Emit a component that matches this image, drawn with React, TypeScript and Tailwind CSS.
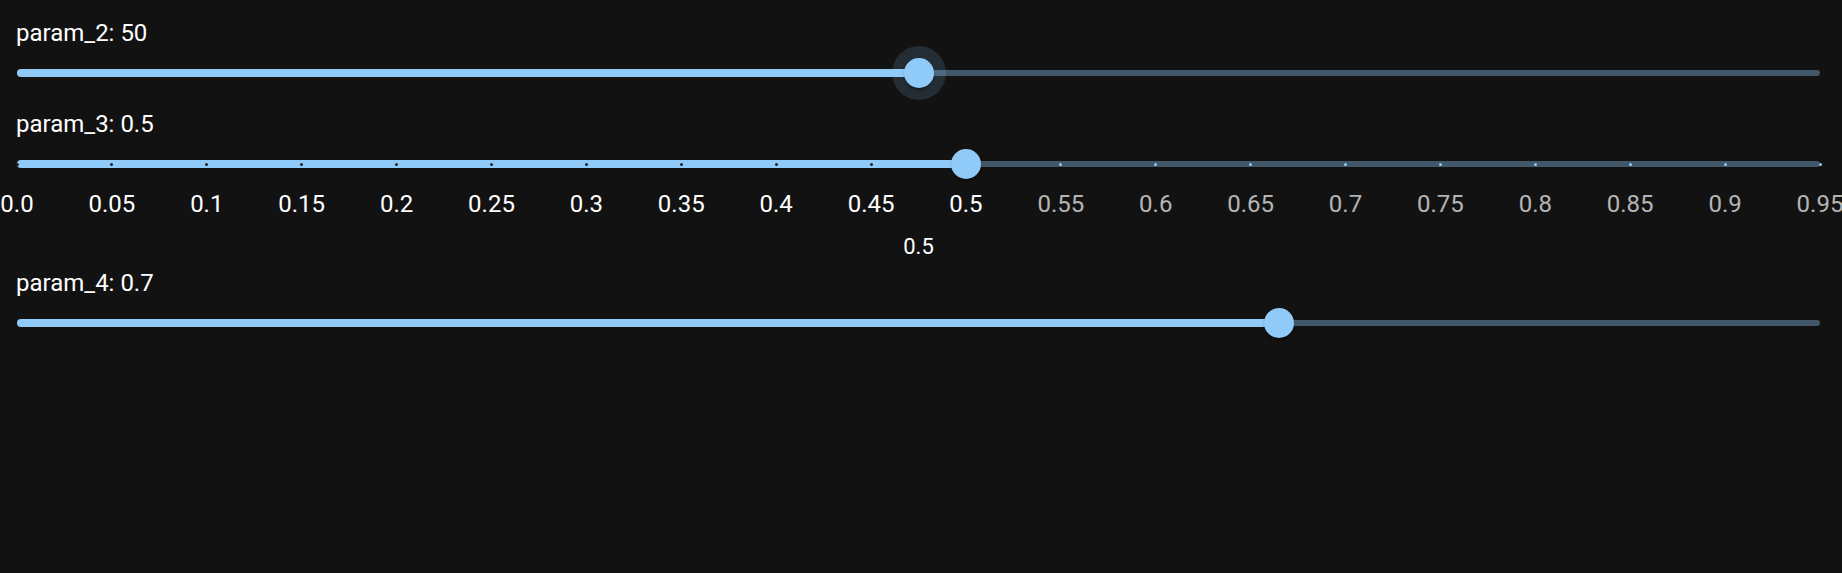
import React from "react"

type Mark = { value: number, label: string }

const TICKS: string[] = [
    "0.0", "0.05", "0.1", "0.15", "0.2", "0.25", "0.3", "0.35", "0.4", "0.45",
    "0.5", "0.55", "0.6", "0.65", "0.7", "0.75", "0.8", "0.85", "0.9", "0.95",
]

const marks: Mark[] = TICKS.map((label, i) => ({ value: i * 0.05, label }))

interface SliderProps {
    label: string
    value: number
    min: number
    max: number
    marks?: Mark[]
    focused?: boolean
}

const ParamSlider: React.FC<SliderProps> = ({ label, value, min, max, marks, focused }) => {
    const pos = (v: number) => ((v - min) / (max - min)) * 100
    const pct = pos(value)

    return (
        <div className="flex flex-col">
            <div className="text-[24px] leading-[36px] text-white -ml-px">{label}</div>
            <div className="relative h-[45px]">
                {/* rail */}
                <div className="absolute left-0 right-0 top-[19px] h-[6px] rounded-full bg-[#42586a]" />
                {/* active track */}
                <div
                    className="absolute left-0 top-[18px] h-[8px] rounded-full bg-[#90caf9]"
                    style={{ width: `${pct}%` }}
                />
                {marks && marks.map((m) => {
                    const active = m.value <= value + 1e-9
                    return (
                        <React.Fragment key={m.label}>
                            <div
                                className={
                                    active
                                        ? "absolute top-[20.5px] w-[3px] h-[3px] -ml-[1.5px] rounded-[1.5px] bg-[#1b252d]"
                                        : "absolute top-[20.5px] w-[3px] h-[3px] -ml-[1.5px] rounded-[1.5px] bg-[#90caf9]"
                                }
                                style={{ left: `${pos(m.value)}%` }}
                            />
                            <div
                                className={
                                    active
                                        ? "absolute top-[44px] -translate-x-1/2 text-[24px] leading-[36px] whitespace-nowrap text-white"
                                        : "absolute top-[44px] -translate-x-1/2 text-[24px] leading-[36px] whitespace-nowrap text-white/70"
                                }
                                style={{ left: `${pos(m.value)}%` }}
                            >
                                {m.label}
                            </div>
                        </React.Fragment>
                    )
                })}
                {focused && (
                    <div
                        className="absolute top-[-5px] w-[54px] h-[54px] -ml-[27px] rounded-full bg-[#90caf9]/15"
                        style={{ left: `${pct}%` }}
                    />
                )}
                <div
                    className="absolute top-[7px] w-[30px] h-[30px] -ml-[15px] rounded-full bg-[#90caf9] shadow-[0_3px_2px_-2px_rgba(0,0,0,0.35),0_2px_3px_0_rgba(0,0,0,0.2)]"
                    style={{ left: `${pct}%` }}
                />
            </div>
        </div>
    )
}

export default function App() {
    return (
        <div
            className="min-h-screen w-full overflow-hidden bg-[#121212] pt-[15px] pl-[17px] pr-[22px] flex flex-col"
            style={{ fontFamily: "Roboto, 'Liberation Sans', sans-serif" }}
        >
            <div className="flex flex-col gap-[10px]">
                <ParamSlider label="param_2: 50" value={50} min={0} max={100} focused />
                <ParamSlider label="param_3: 0.5" value={0.5} min={0} max={0.95} marks={marks} />
            </div>
            <div className="mt-[43px] mb-[2px] text-center text-[22px] leading-[33px] text-white">0.5</div>
            <ParamSlider label="param_4: 0.7" value={0.7} min={0} max={1} />
        </div>
    )
}
